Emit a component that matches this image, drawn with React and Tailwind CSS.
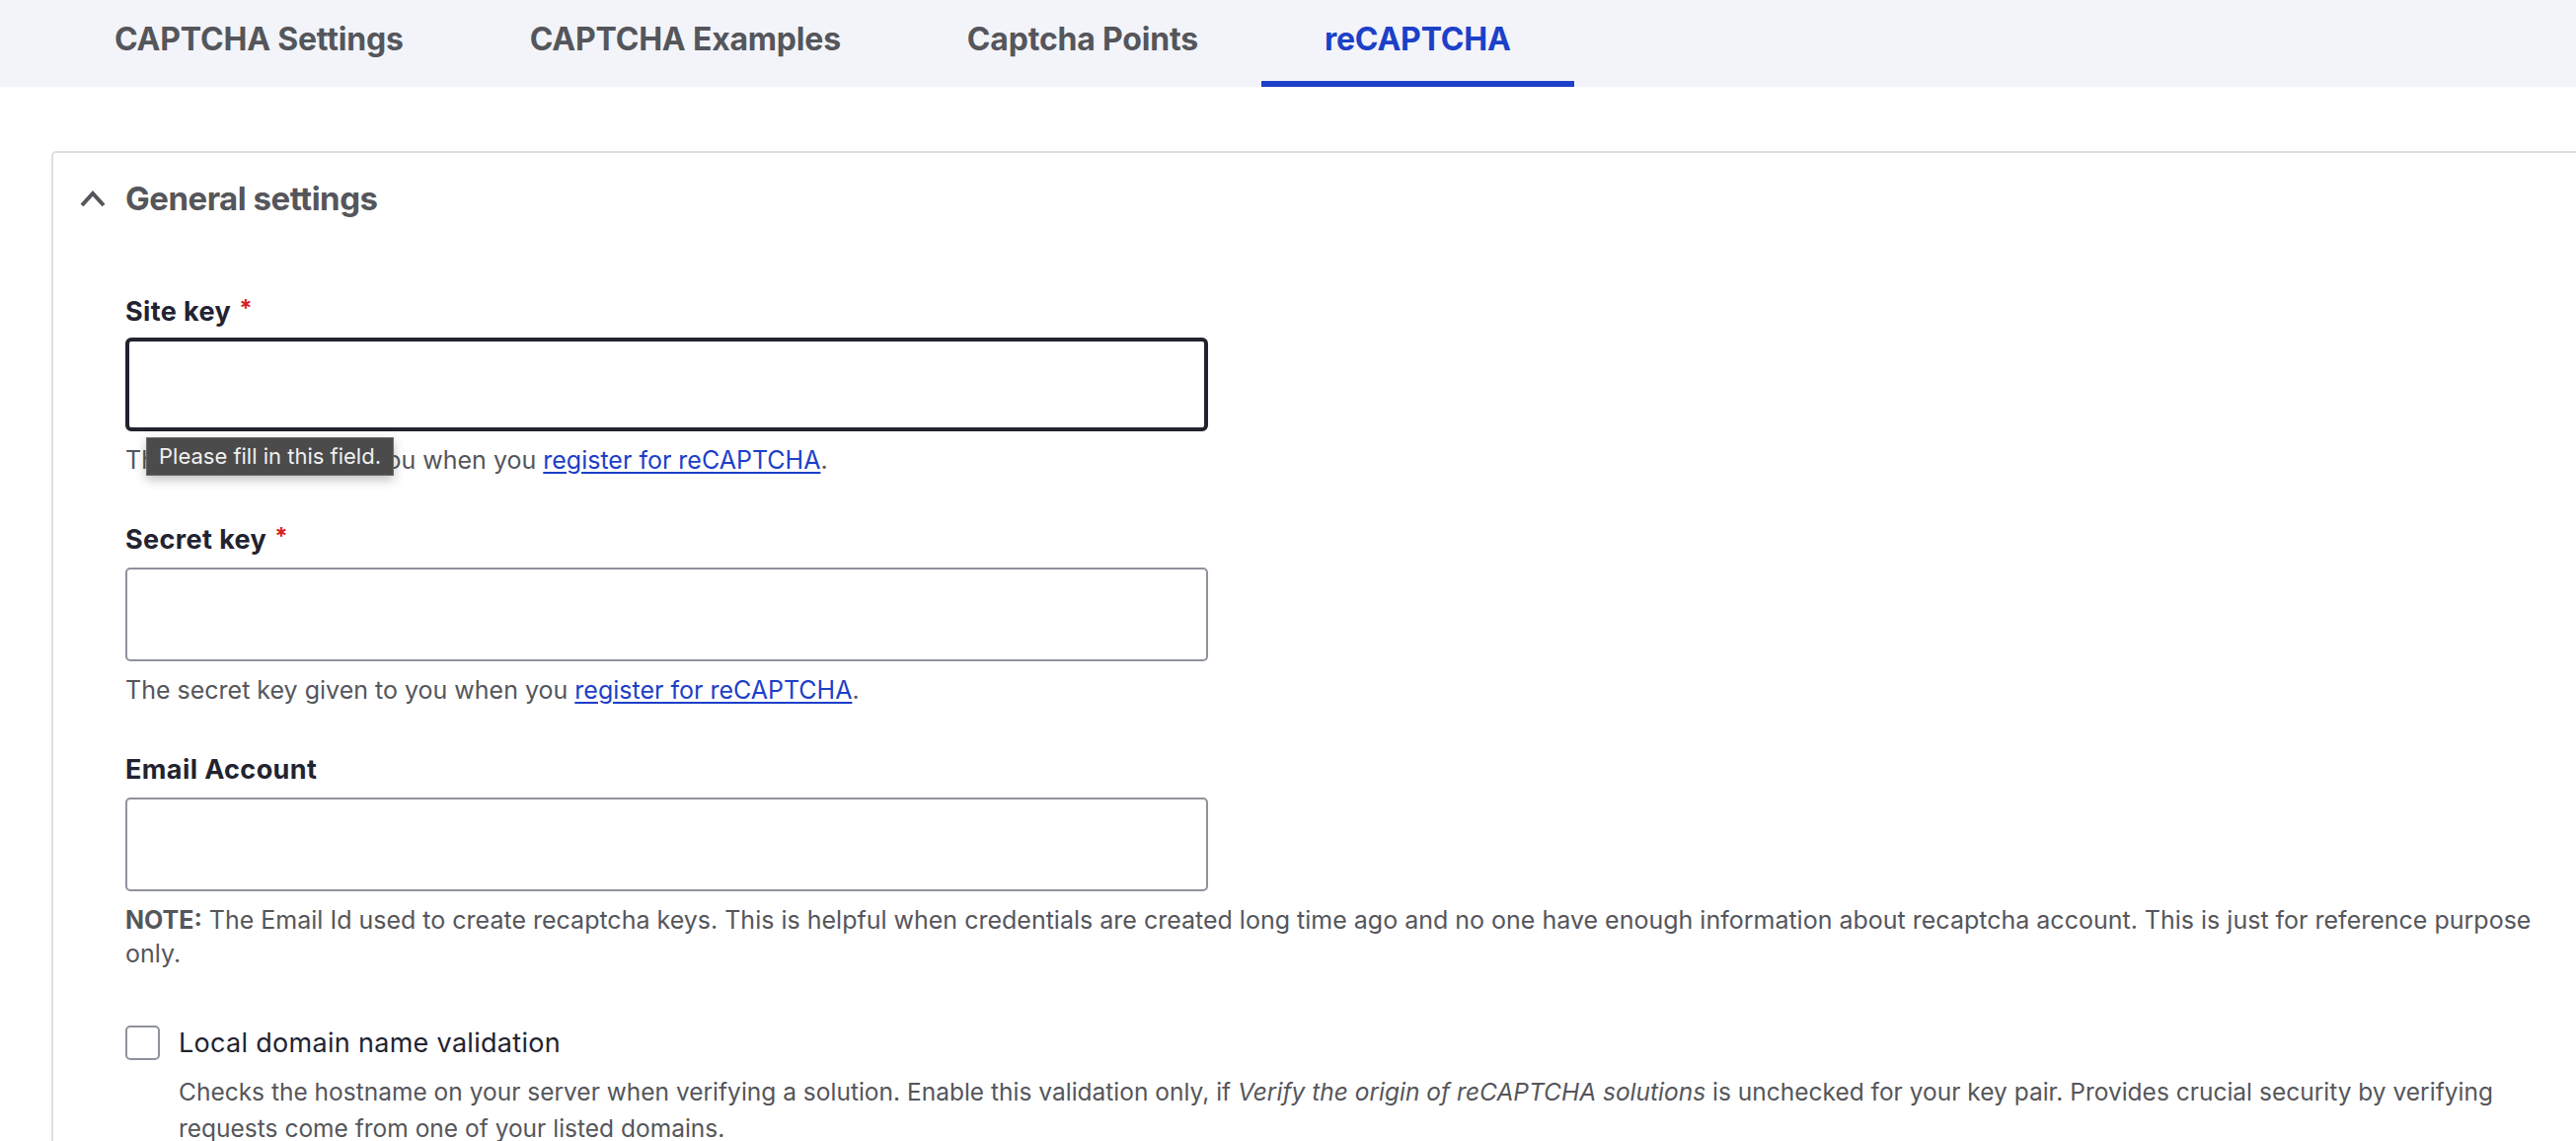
import React from 'react';

const tabs = ['CAPTCHA Settings', 'CAPTCHA Examples', 'Captcha Points', 'reCAPTCHA'];

const Label = ({ children, required }) => (
  <div className="h-[32px] flex items-center text-[27px] font-bold text-[#222330] leading-[32px] tracking-[0.4px]">
    <span>{children}</span>
    {required && <span className="ml-[8px] text-[#d72222] text-[24px] self-start mt-[-3px]">*</span>}
  </div>
);

const Desc = ({ children, className = '' }) => (
  <div className={`leading-[34px] text-[#55565b] ${className}`}>{children}</div>
);

const RegisterLink = () => (
  <a href="#" className="text-[#1d3fc8] underline underline-offset-[3px] decoration-[2px]">
    register for reCAPTCHA
  </a>
);

const App = () => {
  return (
    <div className="w-[2610px] h-[1156px] overflow-hidden bg-white font-['Inter',sans-serif]">
      {/* tabs */}
      <nav className="h-[88px] bg-[#f3f4f9] flex pl-[52px]">
        {tabs.map((t, i) => {
          const active = i === tabs.length - 1;
          return (
            <div
              key={t}
              className={`relative h-full px-[64px] flex items-center pb-[8px] text-[32px] font-bold tracking-[-0.2px] ${
                active ? 'text-[#1d40c8]' : 'text-[#55565b]'
              }`}
            >
              {t}
              {active && <div className="absolute left-0 right-0 bottom-0 h-[6px] bg-[#1d40c8]" />}
            </div>
          );
        })}
      </nav>

      <div className="pl-[52px] pt-[65px]">
        <div className="w-[2600px] border-2 border-[#dedfe4] rounded-[5px] h-[1200px]">
          {/* summary */}
          <div className="flex items-center pl-[27px] pt-[25px] h-[67px]">
            <svg width="26" height="17" viewBox="0 0 26 17" fill="none" className="shrink-0">
              <polyline points="2,15 13,3 24,15" stroke="#55565b" strokeWidth="4" />
            </svg>
            <span className="ml-[20px] text-[33px] font-bold leading-[40px] text-[#55565b] tracking-[-0.5px]">
              General settings
            </span>
          </div>

          <div className="pl-[73px] pr-[60px]">
            {/* site key */}
            <div className="mt-[78px]">
              <Label required>Site key</Label>
              <div className="relative mt-[10px]">
                <div className="w-[1097px] h-[95px] border-[4px] border-[#222330] rounded-[6px] bg-white" />
                <div className="absolute left-[21px] top-[101px] z-10 h-[39px] px-[12px] flex items-center bg-[#4b4b4b] border border-[#6b6b6b] text-[22px] text-[#f0f0f0] shadow-[0_4px_10px_rgba(0,0,0,0.25)]">
                  Please fill in this field.
                </div>
              </div>
              <Desc className="mt-[12px] text-[25px]">
                The site key given to you when you <RegisterLink />.
              </Desc>
            </div>

            {/* secret key */}
            <div className="mt-[48px]">
              <Label required>Secret key</Label>
              <div className="mt-[12px] w-[1097px] h-[95px] border-2 border-[#8e929c] rounded-[5px]" />
              <Desc className="mt-[12px] text-[25px]">
                The secret key given to you when you <RegisterLink />.
              </Desc>
            </div>

            {/* email */}
            <div className="mt-[48px]">
              <Label>Email Account</Label>
              <div className="mt-[12px] w-[1097px] h-[95px] border-2 border-[#8e929c] rounded-[5px]" />
              <Desc className="mt-[12px] text-[25px]">
                <strong className="font-bold">NOTE:</strong> The Email Id used to create recaptcha keys. This is helpful
                when credentials are created long time ago and no one have enough information about recaptcha account.
                This is just for reference purpose only.
              </Desc>
            </div>

            {/* checkbox */}
            <div className="mt-[56px]">
              <div className="flex items-center">
                <div className="w-[35px] h-[35px] border-2 border-[#8e929c] rounded-[5px] shrink-0" />
                <span className="ml-[19px] text-[27px] leading-[32px] text-[#222330] tracking-[0.3px]">
                  Local domain name validation
                </span>
              </div>
              <Desc className="ml-[54px] mt-[14px] max-w-[2400px] text-[24.5px] leading-[37px]">
                Checks the hostname on your server when verifying a solution. Enable this validation only, if{' '}
                <em>Verify the origin of reCAPTCHA solutions</em> is unchecked for your key pair. Provides crucial
                security by verifying requests come from one of your listed domains.
              </Desc>
            </div>
          </div>
        </div>
      </div>
    </div>
  );
};

export default App;
